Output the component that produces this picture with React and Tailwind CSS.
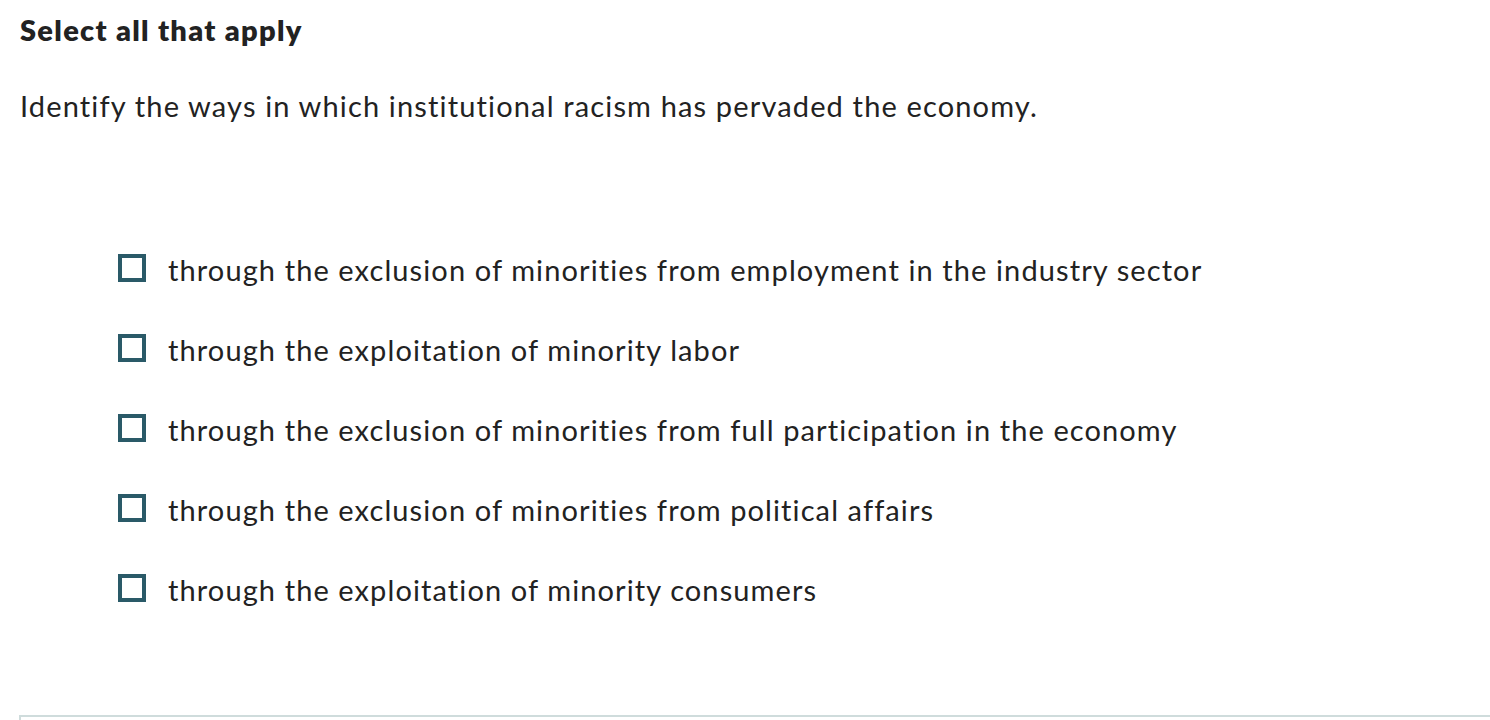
import React from "react";

const options = [
  "through the exclusion of minorities from employment in the industry sector",
  "through the exploitation of minority labor",
  "through the exclusion of minorities from full participation in the economy",
  "through the exclusion of minorities from political affairs",
  "through the exploitation of minority consumers",
];

export default function App() {
  return (
    <div className="w-[1490px] h-[720px] overflow-hidden bg-white text-[#222222]" style={{ fontFamily: "Lato, 'Open Sans', sans-serif" }}>
      <div className="pl-[20px] pt-[11px]">
        <h2 className="text-[29px] font-extrabold leading-[38px] tracking-[1.3px]">Select all that apply</h2>
        <p className="mt-[38px] text-[29px] leading-[38px] tracking-[1.15px]">Identify the ways in which institutional racism has pervaded the economy.</p>
      </div>
      <ul className="mt-[126px] pl-[118px] flex flex-col gap-[42px]">
        {options.map((o) => (
          <li key={o} className="flex items-center h-[38px]">
            <span className="w-[28px] h-[28px] mb-[5px] border-[4px] border-[#2a5a68] shrink-0" />
            <span className="ml-[22px] text-[29px] leading-[38px] tracking-[1.1px]">{o}</span>
          </li>
        ))}
      </ul>
      <div className="mt-[106px] ml-[19px] h-[40px] border-t-2 border-l-2 border-[#cfdcdc]" />
    </div>
  );
}
